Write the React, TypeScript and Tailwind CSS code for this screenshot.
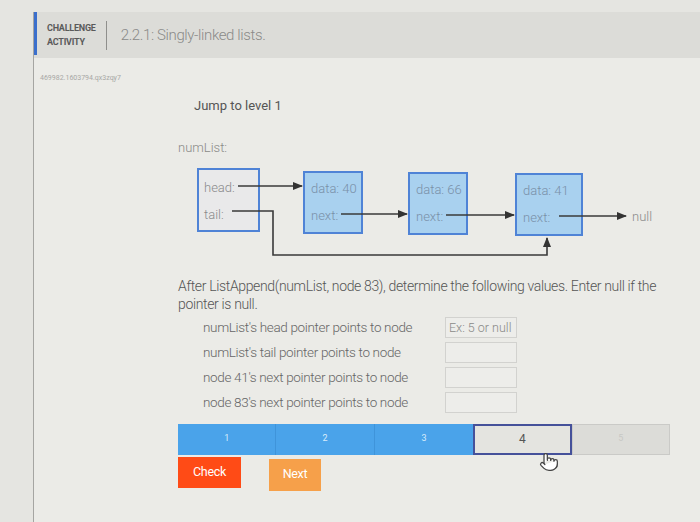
import React from "react";
import { Pointer } from "lucide-react";

const rows = [
  { label: "numList's head pointer points to node", ph: "Ex: 5 or null" },
  { label: "numList's tail pointer points to node", ph: "" },
  { label: "node 41's next pointer points to node", ph: "" },
  { label: "node 83's next pointer points to node", ph: "" },
];

function Node({ left, top, w, data }: { left: number; top: number; w: number; data: string }) {
  return (
    <div
      className="absolute border-2 border-[#4f83d6] bg-[#a9d1ef] flex flex-col pl-[6px] pt-[6px] gap-[8px] text-[13px] font-light text-[#7990a8]"
      style={{ left, top, width: w, height: 63 }}
    >
      <span>data: {data}</span>
      <span>next:</span>
    </div>
  );
}

export default function App() {
  return (
    <div
      className="relative w-[700px] h-[522px] overflow-hidden bg-[#e5e5e1] pl-[33px] pt-[12px]"
      style={{ fontFamily: "Roboto, 'Liberation Sans', sans-serif" }}
    >
      <div className="h-full border-l border-[#a5a5a2] bg-[#ebebe7] flex flex-col">
        {/* header */}
        <div className="h-[46px] bg-[#dcdcd8] flex items-center">
          <div className="w-[3px] h-[43px] self-start bg-[#3b6fcc]" />
          <div className="pl-[10px] pr-[10px] text-[9px] font-bold leading-[14px] text-[#5a5a5a] tracking-tight">
            <div>CHALLENGE</div>
            <div>ACTIVITY</div>
          </div>
          <div className="w-px h-[29px] bg-[#8f8f8c]" />
          <div className="pl-[14px] text-[15px] font-light text-[#8a8a88] tracking-tight">2.2.1: Singly-linked lists.</div>
        </div>

        <div className="pl-[6px] pt-[15px] text-[7px] text-[#a8a8a6]">469982.1603794.qx3zqy7</div>

        <div className="pl-[144px] flex flex-col">
          <div className="ml-[16px] mt-[12px] text-[13px] text-[#555]">Jump to level 1</div>
          <div className="mt-[23px] text-[13px] font-light text-[#8a8a88]">numList:</div>

          {/* diagram */}
          <div className="relative w-[500px] h-[100px] mt-[7px]">
            <div className="absolute left-[19px] top-[3px] w-[63px] h-[64px] border-2 border-[#4f83d6] bg-[#e9e9ea] flex flex-col pl-[5px] pt-[8px] gap-[8px] text-[13px] font-light text-[#8a8a8a]">
              <span>head:</span>
              <span>tail:</span>
            </div>
            <Node left={125} top={6} w={60} data="40" />
            <Node left={230} top={7} w={60} data="66" />
            <Node left={337} top={8} w={68} data="41" />
            <svg className="absolute left-0 top-0" width="500" height="100" viewBox="0 0 500 100">
              <defs>
                <marker id="ah" markerWidth="10" markerHeight="8" refX="9" refY="4" orient="auto" markerUnits="userSpaceOnUse">
                  <path d="M0,0 L10,4 L0,8 Z" fill="#333" />
                </marker>
              </defs>
              <g stroke="#3a3a3a" strokeWidth="1.6" fill="none">
                <line x1="60" y1="21" x2="124" y2="21" markerEnd="url(#ah)" />
                <line x1="163" y1="49" x2="229" y2="49" markerEnd="url(#ah)" />
                <line x1="268" y1="50" x2="336" y2="50" markerEnd="url(#ah)" />
                <line x1="381" y1="51" x2="448" y2="51" markerEnd="url(#ah)" />
                <polyline points="54,46 95,46 95,90 369,90 369,73" markerEnd="url(#ah)" />
              </g>
              <text x="454" y="56" fontSize="13" fill="#8a8a8a" fontWeight="300">null</text>
            </svg>
          </div>

          <div className="mt-[12px] w-[500px] text-[14px] leading-[18px] font-light text-[#555] tracking-tight">
            After ListAppend(numList, node 83), determine the following values. Enter null if the pointer is null.
          </div>

          <div className="mt-[4px] ml-[25px] flex flex-col gap-[4px]">
            {rows.map((r, i) => (
              <div key={i} className="flex items-center h-[21px]">
                <div className="w-[242px] text-[13.5px] font-light text-[#666] tracking-tight">{r.label}</div>
                <div className="w-[72px] h-[21px] border border-[#d2d2cf] bg-[#ededea] text-[12.5px] font-light text-[#8a8a88] px-[3px] leading-[19px]">
                  {r.ph}
                </div>
              </div>
            ))}
          </div>

          {/* progress */}
          <div className="mt-[11px] w-[492px] h-[31px] grid grid-cols-5 text-[9px]">
            <div className="bg-[#4aa3ea] text-[#d8ecfb] flex items-center justify-center border-r border-[#3f94da]">1</div>
            <div className="bg-[#4aa3ea] text-[#d8ecfb] flex items-center justify-center border-r border-[#3f94da]">2</div>
            <div className="bg-[#4aa3ea] text-[#d8ecfb] flex items-center justify-center">3</div>
            <div className="bg-[#e4e4e0] border-2 border-[#45519a] text-[12px] text-[#555] flex items-center justify-center">4</div>
            <div className="bg-[#dcdcd8] border border-[#cacac7] text-[#c8c8c5] flex items-center justify-center">5</div>
          </div>

          <div className="mt-[2px] flex items-start gap-[28px]">
            <button className="w-[63px] h-[31px] bg-[#ff4b16] text-white text-[12.5px] tracking-tight">Check</button>
            <button className="mt-[2px] w-[52px] h-[32px] bg-[#f6a04a] text-white text-[12.5px] tracking-tight">Next</button>
          </div>
        </div>
      </div>

      <div className="absolute left-[539px] top-[452px]">
        <Pointer size={20} strokeWidth={1.5} color="#444" fill="#ffffff" />
      </div>
    </div>
  );
}
